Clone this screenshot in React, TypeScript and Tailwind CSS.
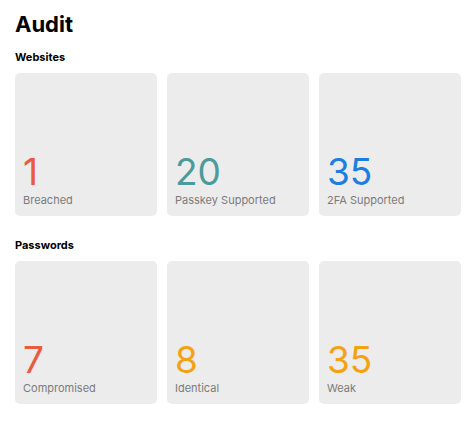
const websites = [
  { value: "1", label: "Breached", color: "text-[#ea5a3f]" },
  { value: "20", label: "Passkey Supported", color: "text-[#4b9a9c]" },
  { value: "35", label: "2FA Supported", color: "text-[#1c7ee3]" },
];

const passwords = [
  { value: "7", label: "Compromised", color: "text-[#ea5a3f]" },
  { value: "8", label: "Identical", color: "text-[#f5a114]" },
  { value: "35", label: "Weak", color: "text-[#f5a114]" },
];

interface Stat {
  value: string;
  label: string;
  color: string;
}

function StatGrid({ stats }: { stats: Stat[] }) {
  return (
    <div className="mt-[9px] grid grid-cols-[142px_142px_142px] gap-[10px]">
      {stats.map((s) => (
        <div
          key={s.label}
          className="flex h-[143px] flex-col justify-end rounded-[5px] bg-[#ececec] px-2 pb-[9px]"
        >
          <div className={`text-[37px] leading-[37px] ${s.color}`}>{s.value}</div>
          <div className="mt-[3px] text-[11px] leading-[14px] text-[#7b7b7b]">{s.label}</div>
        </div>
      ))}
    </div>
  );
}

export default function App() {
  return (
    <div className="min-h-[429px] bg-white px-[15px] pt-[10px] font-['Inter','Liberation_Sans',sans-serif] text-black">
      <h1 className="text-[22px] font-bold leading-[28px]">Audit</h1>

      <h2 className="mt-[12px] text-[11px] font-bold leading-[14px]">Websites</h2>
      <StatGrid stats={websites} />

      <h2 className="mt-[22px] text-[11px] font-bold leading-[14px]">Passwords</h2>
      <StatGrid stats={passwords} />
    </div>
  );
}
